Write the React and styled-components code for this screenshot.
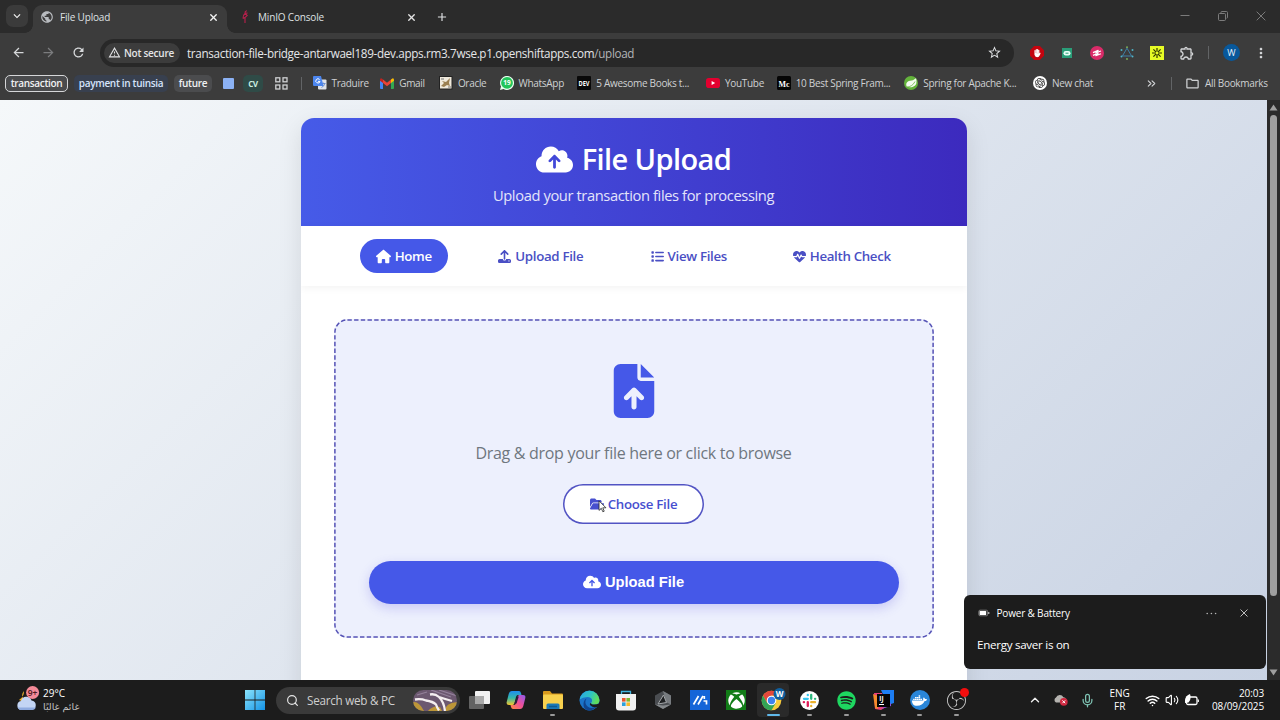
import React from "react";
import styled, { createGlobalStyle } from "styled-components";
import {
    FaCloudArrowUp,
    FaHouse,
    FaUpload,
    FaList,
    FaHeartPulse,
    FaFileArrowUp,
    FaFolderOpen,
    FaSpotify,
    FaDocker,
    FaXbox,
} from "react-icons/fa6";
import {
    MdArrowBack,
    MdArrowForward,
    MdRefresh,
    MdKeyboardArrowDown,
    MdAdd,
    MdStarBorder,
    MdMoreVert,
    MdOutlineWarningAmber,
    MdOutlineExtension,
    MdOutlineFolder,
    MdPublic,
} from "react-icons/md";
import { SiOpenai, SiObsstudio } from "react-icons/si";
import { Search, Mic, Wifi, Volume2, ChevronUp, ChevronsRight, X } from "lucide-react";

const GlobalStyle = createGlobalStyle`
    * {
        box-sizing: border-box;
    }
    body {
        margin: 0;
        overflow: hidden;
        font-family: "Open Sans", "Noto Sans", sans-serif;
    }
    svg {
        display: block;
        flex: none;
    }
`;

const BOOKMARKS = [
    { name: "Traduire", width: 35, icon: <TranslateIcon /> },
    { name: "Gmail", width: 26, icon: <GmailIcon /> },
    { name: "Oracle", width: 28, icon: <OracleIcon /> },
    { name: "WhatsApp", width: 45, icon: <WhatsAppIcon /> },
    { name: "5 Awesome Books t...", width: 96, icon: <DevIcon /> },
    { name: "YouTube", width: 38, icon: <YouTubeIcon /> },
    { name: "10 Best Spring Fram...", width: 95, icon: <MkIcon /> },
    { name: "Spring for Apache K...", width: 96, icon: <SpringIcon /> },
    { name: "New chat", width: 42, icon: <ChatIcon /> },
];

const TASKS = [
    { id: "taskview", icon: <TaskViewIcon /> },
    { id: "copilot", icon: <CopilotIcon /> },
    { id: "explorer", icon: <ExplorerIcon />, open: true },
    { id: "edge", icon: <EdgeIcon /> },
    { id: "store", icon: <StoreIcon /> },
    { id: "armoury", icon: <ArmouryIcon /> },
    { id: "myasus", icon: <MyAsusIcon /> },
    { id: "xbox", icon: <XboxIcon /> },
    { id: "chrome", icon: <ChromeIcon />, open: true, active: true },
    { id: "slack", icon: <SlackIcon />, open: true },
    { id: "spotify", icon: <FaSpotify size={19} color="#1ed760" />, open: true },
    { id: "idea", icon: <IdeaIcon />, open: true },
    { id: "docker", icon: <DockerIcon />, open: true },
    { id: "obs", icon: <ObsIcon />, open: true },
];

export default function App() {
    return (
        <Screen>
            <GlobalStyle />
            <Browser />
            <Viewport>
                <UploadPage />
                <Scrollbar>
                    <ScrollArrow viewBox="0 0 9 7">
                        <path d="M4.5 0.5 8.5 6.5H0.5z" />
                    </ScrollArrow>
                    <ScrollThumb />
                    <ScrollArrow viewBox="0 0 9 7">
                        <path d="M4.5 6.5 8.5 0.5H0.5z" />
                    </ScrollArrow>
                </Scrollbar>
                <Toast>
                    <ToastHead>
                        <svg width="12" height="8" viewBox="0 0 12 8">
                            <rect x="0.8" y="1.2" width="8.8" height="5.6" rx="1.2" fill="none" stroke="#8d8d8d" strokeWidth="0.8" />
                            <rect x="1.6" y="2" width="6.6" height="4" rx="0.6" fill="#fff" />
                            <path d="M10.8 3v2" stroke="#ddd" strokeWidth="1" />
                        </svg>
                        <ToastApp>Power &amp; Battery</ToastApp>
                        <svg width="11" height="3" viewBox="0 0 11 3" fill="#b5b5b5">
                            <circle cx="1.2" cy="1.5" r="0.8" />
                            <circle cx="5.4" cy="1.5" r="0.8" />
                            <circle cx="9.6" cy="1.5" r="0.8" />
                        </svg>
                        <ToastClose viewBox="0 0 8 8">
                            <path d="M0.5 0.5l7 7M7.5 0.5l-7 7" />
                        </ToastClose>
                    </ToastHead>
                    <ToastBody>Energy saver is on</ToastBody>
                </Toast>
            </Viewport>
            <Taskbar />
        </Screen>
    );
}

function Browser() {
    return (
        <div>
            <TabStrip>
                <TabSearch>
                    <MdKeyboardArrowDown size={14} />
                </TabSearch>
                <Tab $active>
                    <MdPublic size={14} color="#b9bcc0" />
                    <TabTitle>File Upload</TabTitle>
                    <X size={11} color="#f4f4f4" strokeWidth={3} />
                </Tab>
                <Tab>
                    <MinioIcon />
                    <TabTitle>MinIO Console</TabTitle>
                    <X size={11} color="#e4e4e4" strokeWidth={3} />
                </Tab>
                <NewTab>
                    <MdAdd size={14} />
                </NewTab>
                <WindowButtons>
                    <svg width="10" height="10" viewBox="0 0 10 10">
                        <path d="M0.5 4.5h9" />
                    </svg>
                    <svg width="10" height="10" viewBox="0 0 10 10">
                        <rect x="0.5" y="2.5" width="7" height="7" rx="1" />
                        <path d="M3 2V1.2Q3 .5 3.7.5H8.5Q9.5.5 9.5 1.5V6.5Q9.5 7.2 8.5 7.2" />
                    </svg>
                    <svg width="10" height="10" viewBox="0 0 10 10">
                        <path d="M0.7 0.7l8.6 8.6M9.3 0.7L0.7 9.3" />
                    </svg>
                </WindowButtons>
            </TabStrip>
            <Toolbar>
                <NavButton>
                    <MdArrowBack size={15} color="#d6d8da" />
                </NavButton>
                <NavButton>
                    <MdArrowForward size={15} color="#7b7c7e" />
                </NavButton>
                <NavButton>
                    <MdRefresh size={15} color="#d6d8da" />
                </NavButton>
                <Omnibox>
                    <NotSecure>
                        <MdOutlineWarningAmber size={13} />
                        <span>Not secure</span>
                    </NotSecure>
                    <Url>
                        transaction-file-bridge-antarwael189-dev.apps.rm3.7wse.p1.openshiftapps.com
                        <UrlPath>/upload</UrlPath>
                    </Url>
                    <MdStarBorder size={15} color="#dfe1e3" />
                </Omnibox>
                <Extensions>
                    <svg width="14" height="14" viewBox="0 0 14 14">
                        <path d="M4.2 0h5.6L14 4.2v5.6L9.8 14H4.2L0 9.8V4.2z" fill="#c4040f" />
                        <path
                            d="M5 7V4.6M6.3 6.5V3.5M7.6 6.5V3.5M8.8 7V4.2M5 7v1.6q.4 2 2.1 2 1.6 0 2.3-1.900l.6-1.500"
                            fill="#fff"
                            stroke="#fff"
                            strokeWidth="1.1"
                            strokeLinecap="round"
                        />
                    </svg>
                    <svg width="10" height="10" viewBox="0 0 10 10">
                        <rect width="10" height="10" fill="#2a9d78" />
                        <rect x="1.5" y="3" width="7" height="4.4" rx="2.2" fill="#e8fff7" />
                        <path d="M3.5 5.2h3" stroke="#2a9d78" strokeWidth="1" />
                    </svg>
                    <svg width="14" height="14" viewBox="0 0 14 14">
                        <circle cx="7" cy="7" r="7" fill="#d92b68" />
                        <path
                            d="M3 6.6 8.2 4.4 5.8 6.8 11 5M3 9.4 8.2 7.2 5.8 9.6 11 7.8"
                            fill="none"
                            stroke="#fff"
                            strokeWidth="1.2"
                            strokeLinejoin="round"
                        />
                    </svg>
                    <svg width="14" height="14" viewBox="0 0 14 14">
                        <path d="M7 2.2 2.4 10h9.2z" fill="none" stroke="#3e7fa5" strokeWidth="1" />
                        <g fill="#7fb85a">
                            <circle cx="7" cy="1.2" r="0.9" />
                            <circle cx="7" cy="13" r="0.9" />
                        </g>
                        <g fill="#4fb4c8">
                            <circle cx="1.5" cy="4" r="1" />
                            <circle cx="12.5" cy="4" r="1" />
                            <circle cx="1.5" cy="10.5" r="1" />
                            <circle cx="12.5" cy="10.5" r="1" />
                        </g>
                    </svg>
                    <svg width="14" height="14" viewBox="0 0 14 14">
                        <rect width="14" height="14" fill="#e6fb25" />
                        <path
                            d="M7 2v10M2 7h10M3.4 3.4l7.2 7.2M10.6 3.4l-7.2 7.2"
                            stroke="#2c3300"
                            strokeWidth="1.2"
                        />
                        <circle cx="7" cy="7" r="1.4" fill="#e6fb25" />
                    </svg>
                    <MdOutlineExtension size={16} color="#d3d5d7" />
                </Extensions>
                <Divider />
                <Profile>W</Profile>
                <MdMoreVert size={16} color="#d6d8da" />
            </Toolbar>
            <BookmarkBar>
                <Chip $w="63px" $bg="#4a4b4d" $outlined>
                    transaction
                </Chip>
                <Chip $w="94px" $bg="#38404f" $color="#d5e3fb">
                    payment in tuinsia
                </Chip>
                <Chip $w="38px" $bg="#4b4c4e">
                    future
                </Chip>
                <BlueSquare />
                <Chip $w="20px" $bg="#2f4b47" $color="#cbf0e2">
                    cv
                </Chip>
                <AppsGrid viewBox="0 0 13 13">
                    <rect x="0.8" y="0.8" width="4" height="4" />
                    <rect x="8" y="0.8" width="4" height="4" />
                    <rect x="0.8" y="8" width="4" height="4" />
                    <rect x="8" y="8" width="4" height="4" />
                </AppsGrid>
                <Divider />
                <BookmarkList>
                    {BOOKMARKS.map((item) => (
                        <Bookmark key={item.name}>
                            {item.icon}
                            <BookmarkName $w={item.width}>{item.name}</BookmarkName>
                        </Bookmark>
                    ))}
                </BookmarkList>
                <ChevronsRight size={13} color="#d3d5d7" />
                <Divider $gap="13px" />
                <Bookmark>
                    <MdOutlineFolder size={15} />
                    <BookmarkName $w={64}>All Bookmarks</BookmarkName>
                </Bookmark>
            </BookmarkBar>
        </div>
    );
}

function UploadPage() {
    return (
        <Page>
            <Card>
                <CardHeader>
                    <Title>
                        <FaCloudArrowUp size={37} />
                        <span>File Upload</span>
                    </Title>
                    <Subtitle>Upload your transaction files for processing</Subtitle>
                </CardHeader>
                <Nav>
                    <NavLink $active $w={88}>
                        <FaHouse size={15} />
                        Home
                    </NavLink>
                    <NavLink $w={119}>
                        <FaUpload size={13} />
                        Upload File
                    </NavLink>
                    <NavLink $w={110}>
                        <FaList size={13} />
                        View Files
                    </NavLink>
                    <NavLink $w={129}>
                        <FaHeartPulse size={13} />
                        Health Check
                    </NavLink>
                </Nav>
                <DropZone>
                    <DashedOutline>
                        <rect x="0.9" y="0.9" width="598.2" height="317.2" rx="12.5" />
                    </DashedOutline>
                    <FaFileArrowUp size={54} color="#4558e8" />
                    <DropText>Drag &amp; drop your file here or click to browse</DropText>
                    <ChooseButton>
                        <FaFolderOpen size={14} />
                        Choose File
                        <Pointer viewBox="0 0 10 15">
                            <path d="M1 1v11l2.6-2.4 1.8 4 1.6-.7-1.7-3.9H9z" />
                        </Pointer>
                    </ChooseButton>
                    <SubmitButton>
                        <FaCloudArrowUp size={18} />
                        Upload File
                    </SubmitButton>
                </DropZone>
            </Card>
        </Page>
    );
}

function Taskbar() {
    return (
        <Bar>
            <Weather>
                <WeatherIcon />
                <WeatherText>
                    <span>29°C</span>
                    <Condition dir="rtl">غائم غالبًا</Condition>
                </WeatherText>
            </Weather>
            <svg width="20" height="20" viewBox="0 0 20 20">
                <defs>
                    <linearGradient id="win" x1="0" y1="0" x2="1" y2="1">
                        <stop offset="0" stopColor="#8be3fb" />
                        <stop offset="1" stopColor="#1493e6" />
                    </linearGradient>
                </defs>
                <path d="M0 0h9.6v9.6H0zM10.4 0H20v9.6h-9.6zM0 10.4h9.6V20H0zM10.4 10.4H20V20h-9.6z" fill="url(#win)" />
            </svg>
            <SearchBox>
                <Search size={13} strokeWidth={2.2} color="#e6e6e6" />
                <SearchText>Search web &amp; PC</SearchText>
                <SearchArt />
            </SearchBox>
            <Tasks>
                {TASKS.map((task) => (
                    <Task key={task.id} $active={task.active}>
                        {task.icon}
                        {task.open && <Indicator $active={task.active} />}
                    </Task>
                ))}
            </Tasks>
            <Tray>
                <ChevronUp size={14} strokeWidth={2.4} color="#f0f0f0" />
                <svg width="15" height="12" viewBox="0 0 15 12">
                    <path d="M3 8.6a2.8 2.8 0 0 1 0-5A4 4 0 0 1 10.4 3.2 3 3 0 0 1 12 8.6z" fill="#b5b3af" />
                    <circle cx="10.8" cy="7.8" r="3.9" fill="#cf2840" />
                    <path d="M9.4 6.4l2.8 2.8M12.2 6.4L9.4 9.2" stroke="#fff" strokeWidth="1" />
                </svg>
                <Mic size={15} strokeWidth={2} color="#7fc4b4" />
            </Tray>
            <Language>
                <span>ENG</span>
                <span>FR</span>
            </Language>
            <Status>
                <Wifi size={15} strokeWidth={2.4} />
                <Volume2 size={14} strokeWidth={1.9} />
                <svg width="14" height="12" viewBox="0 0 14 12">
                    <rect x="1.5" y="3" width="10.5" height="7.5" rx="1.5" fill="none" stroke="#fff" strokeWidth="1.3" />
                    <path d="M13.3 5.5v2.5" stroke="#fff" strokeWidth="1.2" />
                    <path d="M0 9Q-.8 2 5 0 6.8 5.5 3.5 8.6z" fill="#fff" />
                </svg>
            </Status>
            <Clock>
                <span>20:03</span>
                <span>08/09/2025</span>
            </Clock>
        </Bar>
    );
}

/* favicons */

function MinioIcon() {
    return (
        <svg width="14" height="14" viewBox="0 0 14 14">
            <path
                d="M9 .8Q6.6 1.2 7.2 3.4L9.2 5.4 7 7.6 4.8 8.4M7.2 3.2Q5 5 5 8.4M7 7.6V13M7.4 3.2 9.6 3"
                fill="none"
                stroke="#b81f4c"
                strokeWidth="1.1"
            />
        </svg>
    );
}

function TranslateIcon() {
    return (
        <svg width="14" height="14" viewBox="0 0 14 14">
            <rect x="5" y="3.5" width="8.5" height="10" rx="1" fill="#dfe3ea" />
            <path d="M8 7.5h4.5M10.2 6.5v1M8.5 11.5q3-1.5 3.2-4" stroke="#6b8fd0" fill="none" />
            <path d="M1 0h7l2.5 10H1q-1 0-1-1V1Q0 0 1 0z" fill="#4c86ee" />
            <path d="M6.6 3.6A2.1 2.1 0 1 0 7 5.4H5" stroke="#fff" fill="none" strokeWidth="1" />
        </svg>
    );
}

function GmailIcon() {
    return (
        <svg width="14" height="11" viewBox="0 0 14 11">
            <path d="M0 2v8q0 1 1 1h2V4z" fill="#4285f4" />
            <path d="M14 2v8q0 1-1 1h-2V4z" fill="#34a853" />
            <path d="M3 1.5 7 4.7 11 1.5V5L7 8.2 3 5z" fill="#ea4335" />
            <path d="M0 2Q0 0 1.6.4L3 1.5V5L0 2.8z" fill="#c5221f" />
            <path d="M14 2q0-2-1.6-1.6L11 1.5V5l3-2.2z" fill="#fbbc04" />
        </svg>
    );
}

function OracleIcon() {
    return (
        <svg width="14" height="14" viewBox="0 0 14 14">
            <rect x="0.5" y="0.5" width="12.5" height="12.5" fill="#efe9dc" stroke="#222" />
            <path d="M2 10 5 7 3 5l4 1 4-4-1 5 1 3-3-1-3 2z" fill="#9b8052" />
            <path d="M2 3h3M9 11h3" stroke="#777" />
        </svg>
    );
}

function WhatsAppIcon() {
    return (
        <svg width="14" height="14" viewBox="0 0 14 14">
            <path d="M0 14 1 10.5A7 7 0 1 1 3.5 13z" fill="#e9fff0" />
            <circle cx="7" cy="6.9" r="5.9" fill="#22c55a" />
            <BadgeText x="7" y="9.3" fontSize="6.5">
                19
            </BadgeText>
        </svg>
    );
}

function DevIcon() {
    return (
        <svg width="14" height="14" viewBox="0 0 14 14">
            <rect width="14" height="14" rx="1" fill="#090909" />
            <BadgeText x="7" y="9.6" fontSize="7" textLength="11" lengthAdjust="spacingAndGlyphs">
                DEV
            </BadgeText>
        </svg>
    );
}

function YouTubeIcon() {
    return (
        <svg width="14" height="14" viewBox="0 0 14 14">
            <rect y="2" width="14" height="10" rx="2.8" fill="#e3002f" />
            <path d="M5.6 4.9v4.2L9.2 7z" fill="#fff" />
        </svg>
    );
}

function MkIcon() {
    return (
        <svg width="14" height="14" viewBox="0 0 14 14">
            <rect width="14" height="14" rx="1.5" fill="#050505" />
            <SerifText x="1.5" y="10.5" fontSize="9" textLength="11" lengthAdjust="spacingAndGlyphs">
                Mc
            </SerifText>
        </svg>
    );
}

function SpringIcon() {
    return (
        <svg width="14" height="14" viewBox="0 0 14 14">
            <circle cx="7" cy="7" r="7" fill="#64b33c" />
            <path d="M12 2.2Q14 8.5 9 10.8 5.5 12 2.6 10.6 1.2 6.8 4.8 5 9.5 4.8 12 2.2z" fill="#f4fbf0" />
            <path d="M2.4 11.2Q8.5 10.8 11 5.5" fill="none" stroke="#64b33c" strokeWidth="0.8" />
        </svg>
    );
}

function ChatIcon() {
    return (
        <ChatDisc>
            <SiOpenai size={10} color="#222" />
        </ChatDisc>
    );
}

/* taskbar icons */

function WeatherIcon() {
    return (
        <svg width="24" height="26" viewBox="0 0 24 26">
            <path d="M8 5a6.5 6.5 0 0 0 8 10l-6 2-7-3q5-3 5-9z" fill="#f2b42c" />
            <path d="M5 24a4.6 4.6 0 0 1 0-9 5.5 5.5 0 0 1 10.5-.5A4.8 4.8 0 0 1 15.8 24z" fill="#c3d5f4" />
            <path d="M1.5 21.5q1.5 2.5 3.5 2.5h11q2.5 0 4-2.5z" fill="#8fabdf" />
            <circle cx="16.6" cy="6.5" r="6.5" fill="#f48a98" />
            <CountText x="16.6" y="9.5" fontSize="8.5">
                9+
            </CountText>
        </svg>
    );
}

function SearchArt() {
    return (
        <svg width="44" height="21" viewBox="0 0 44 21">
            <defs>
                <clipPath id="art">
                    <rect width="44" height="21" rx="10.5" />
                </clipPath>
            </defs>
            <g clipPath="url(#art)">
                <rect width="44" height="21" fill="#6c5870" />
                <path d="M0 12q6-1 11 9H0zM15 21q5-6 12-4l2 4zM32 21q0-8 12-9v9z" fill="#bd9638" />
                <path
                    d="M2 9.5q6-1 11 1 7 1 10 4 1 3 3 6M17 4.5q5-1 9 2.5 6 2 13 4M26 7q5 5 6 14"
                    fill="none"
                    stroke="#f4eef0"
                    strokeWidth="2.3"
                />
                <path d="M18 0l20 7M26 0l18 6M4 5l10-3" stroke="#93809a" strokeWidth="1.2" />
            </g>
        </svg>
    );
}

function TaskViewIcon() {
    return (
        <svg width="21" height="20" viewBox="0 0 21 20">
            <rect x="6" y="1" width="15" height="13" rx="1" fill="#f0f0f0" />
            <rect x="0" y="6" width="15" height="13" rx="1" fill="#707070" fillOpacity="0.85" />
            <path d="M6 6h9v8H6z" fill="#a9a9a9" />
        </svg>
    );
}

function CopilotIcon() {
    return (
        <svg width="20" height="20" viewBox="0 0 20 20">
            <defs>
                <linearGradient id="copA" x1="0" y1="0" x2="0" y2="1">
                    <stop offset="0" stopColor="#1e8df0" />
                    <stop offset="0.5" stopColor="#35b8a8" />
                    <stop offset="1" stopColor="#f5c62c" />
                </linearGradient>
                <linearGradient id="copB" x1="1" y1="0" x2="0" y2="1">
                    <stop offset="0" stopColor="#8a5cf0" />
                    <stop offset="0.5" stopColor="#ee4f9a" />
                    <stop offset="1" stopColor="#ff8a3c" />
                </linearGradient>
            </defs>
            <path d="M6 1h7q1.5 0 2 2l.5 2h-3.500q-1.500 0-2 2L8.500 13q-.5 2-2 2H3q-3 0-2.300-3l2-8Q3.500 1 6 1z" fill="url(#copA)" />
            <path d="M14 19H7q-1.500 0-2-2l-.5-2H8q1.500 0 2-2L11.500 7q.5-2 2-2H17q3 0 2.300 3l-2 8Q16.500 19 14 19z" fill="url(#copB)" />
            <path d="M11 6.5h1.8L10.5 13.5H8.3z" fill="#2a1d3c" />
        </svg>
    );
}

function ExplorerIcon() {
    return (
        <svg width="20" height="20" viewBox="0 0 20 20">
            <path d="M0 2q0-1 1-1h6l2 2.5h10q1 0 1 1V8H0z" fill="#d99a1c" />
            <rect y="4.5" width="20" height="14.5" rx="1" fill="#f8d14e" />
            <path d="M3.5 19v-4q0-1.500 1.500-1.500h10q1.500 0 1.500 1.500v4z" fill="#1c79b8" />
            <path d="M6 16.5h8" stroke="#0e5b93" strokeWidth="1.5" />
        </svg>
    );
}

function EdgeIcon() {
    return (
        <svg width="21" height="21" viewBox="0 0 21 21">
            <defs>
                <linearGradient id="edgeA" x1="0" y1="0" x2="1" y2="0.3">
                    <stop offset="0" stopColor="#2aa6e8" />
                    <stop offset="0.6" stopColor="#2fc5c0" />
                    <stop offset="1" stopColor="#5fdd5c" />
                </linearGradient>
            </defs>
            <circle cx="10.5" cy="10.5" r="10" fill="#1b74c9" />
            <path d="M.6 9.5A10 10 0 0 1 20.500 10q0 4.500-5 4.500-3.500 0-3.500-1.500 1.500-1.500 1-3.500Q12 7 8.500 7 3.500 7 .6 9.500z" fill="url(#edgeA)" />
            <path d="M7.5 8.5q-2.500 4 .5 7.500 3.500 3.500 9.500.5Q14 21 9 20.400 4 19 4.500 13.500 5 9.500 7.500 8.500z" fill="#10458f" />
            <path d="M12 13q0 1.500 3.500 1.500 2.500 0 4.500-1l1.500 0-3 3.500q-5 1-7-1.500-1.500-1.500.5-2.500z" fill="#1c1c1c" />
        </svg>
    );
}

function StoreIcon() {
    return (
        <svg width="20" height="21" viewBox="0 0 20 21">
            <path d="M5.5 6V1.5h9V6" fill="none" stroke="#3fb4de" strokeWidth="1.3" />
            <path d="M0 4h20v13.5q0 3-3 3H3q-3 0-3-3z" fill="#f1f1f1" />
            <path d="M6 8h3.6v3.6H6z" fill="#e8542c" />
            <path d="M10.4 8H14v3.6h-3.6z" fill="#7cb82f" />
            <path d="M6 12.4h3.6V16H6z" fill="#2b9fdc" />
            <path d="M10.4 12.4H14V16h-3.6z" fill="#f5b92a" />
        </svg>
    );
}

function ArmouryIcon() {
    return (
        <svg width="18" height="20" viewBox="0 0 18 20">
            <path d="M9 1l8 4.5v9L9 19l-8-4.5v-9z" fill="#4a4d51" />
            <path d="M9 1 17 5.5v9L12 12z" fill="#777b7f" />
            <path d="M9.5 5 12.5 12.5 4 14z" fill="#1f2123" stroke="#a4a7aa" strokeWidth="1" />
            <path d="M1 14.5 9 19l8-4.5L9 15.5z" fill="#85898c" />
        </svg>
    );
}

function MyAsusIcon() {
    return (
        <svg width="20" height="20" viewBox="0 0 20 20">
            <rect width="20" height="20" fill="#1565d8" />
            <path d="M3.5 14.5 8.500 6M8 14.5 13 6M14.300 6v3M13.500 11h3v3.500" fill="none" stroke="#fff" strokeWidth="1.7" />
        </svg>
    );
}

function XboxIcon() {
    return (
        <XboxTile>
            <FaXbox size={17} color="#fff" />
        </XboxTile>
    );
}

function ChromeIcon() {
    return (
        <svg width="26" height="24" viewBox="0 0 26 24">
            <circle cx="11.5" cy="12.5" r="9.8" fill="#f7cb3b" />
            <path d="M3 7.6A9.8 9.8 0 0 1 20 7.6h-8.5L7.2 15z" fill="#e4483c" />
            <path d="M3 7.6A9.8 9.8 0 0 0 11.5 22.3L15.8 15H7.2z" fill="#33a455" />
            <circle cx="11.5" cy="12.5" r="4.8" fill="#fff" />
            <circle cx="11.5" cy="12.5" r="3.7" fill="#3e82ee" />
            <circle cx="19.5" cy="6" r="6" fill="#10609f" />
            <BadgeText x="19.5" y="8.9" fontSize="8">
                W
            </BadgeText>
        </svg>
    );
}

function SlackIcon() {
    return (
        <svg width="19" height="19" viewBox="0 0 19 19">
            <circle cx="9.5" cy="9.5" r="9.5" fill="#fff" />
            <g strokeWidth="2.3" strokeLinecap="round" fill="none">
                <path d="M4 7.8h3.8M7.8 3.9v.3" stroke="#36c5f0" />
                <path d="M11.2 4v3.8M15 7.8h.2" stroke="#2eb67d" />
                <path d="M11.2 11.2H15M11.2 15v.2" stroke="#ecb22e" />
                <path d="M7.8 11.2V15M4 11.2h-.2" stroke="#e01e5a" />
            </g>
        </svg>
    );
}

function IdeaIcon() {
    return (
        <svg width="21" height="20" viewBox="0 0 21 20">
            <path d="M8 0h13v13l-6 2z" fill="#1d7df2" />
            <path d="M1 3h8l4 14-5 3-6-1z" fill="#e8407a" />
            <path d="M0 4l5 2v13l-3-1z" fill="#f58b2c" />
            <path d="M8 19l10-3v-3z" fill="#8753e0" />
            <rect x="4" y="4" width="13" height="13" fill="#050505" />
            <BadgeText x="8.5" y="10.5" fontSize="6.5">
                IJ
            </BadgeText>
            <path d="M6 14.5h5" stroke="#fff" />
        </svg>
    );
}

function DockerIcon() {
    return (
        <DockerDisc>
            <FaDocker size={15} color="#fff" />
        </DockerDisc>
    );
}

function ObsIcon() {
    return (
        <ObsWrap>
            <SiObsstudio size={19} color="#c9c9c9" />
            <RecDot />
        </ObsWrap>
    );
}

const Screen = styled.div`
    width: 1280px;
    height: 720px;
    display: flex;
    flex-direction: column;
    overflow: hidden;
    background: #1c1c1c;
`;

const TabStrip = styled.div`
    height: 33px;
    padding: 5px 14px 0 6px;
    display: flex;
    background: #2b2b2b;
    color: #dfe1e3;
`;

const TabSearch = styled.div`
    width: 22px;
    height: 22px;
    margin-right: 5px;
    display: flex;
    align-items: center;
    justify-content: center;
    border-radius: 7px;
    background: #3b3b3b;
    color: #f4f4f4;
`;

const Tab = styled.div`
    position: relative;
    width: ${(props) => (props.$active ? "194px" : "198px")};
    height: 28px;
    padding: 0 8px 4px ${(props) => (props.$active ? "7px" : "11px")};
    display: flex;
    align-items: center;
    gap: 6px;
    border-radius: 9px 9px 0 0;
    background: ${(props) => (props.$active ? "#3c3c3c" : "transparent")};

    ${(props) =>
        props.$active &&
        `
        &::before,
        &::after {
            position: absolute;
            bottom: 0;
            width: 8px;
            height: 8px;
            content: "";
        }
        &::before {
            left: -8px;
            background: radial-gradient(circle at 0 0, transparent 7.5px, #3c3c3c 8px);
        }
        &::after {
            right: -8px;
            background: radial-gradient(circle at 100% 0, transparent 7.5px, #3c3c3c 8px);
        }
    `}
`;

const TabTitle = styled.span`
    flex: 1;
    font-size: 10px;
    letter-spacing: -0.17px;
`;

const NewTab = styled.div`
    height: 23px;
    padding-left: 10px;
    display: flex;
    align-items: center;
`;

const WindowButtons = styled.div`
    height: 22px;
    margin-left: auto;
    display: flex;
    align-items: center;
    gap: 28px;

    svg {
        fill: none;
        stroke: #858585;
        stroke-width: 0.9;
    }
`;

const Toolbar = styled.div`
    height: 38px;
    padding: 1px 0 0 3px;
    display: flex;
    align-items: center;
    background: #3c3c3c;
`;

const NavButton = styled.div`
    width: 30px;
    display: flex;
    flex: none;
    justify-content: center;
`;

const Omnibox = styled.div`
    width: 914px;
    height: 28px;
    margin-left: 7px;
    padding: 0 12px 0 4px;
    display: flex;
    flex: none;
    align-items: center;
    border-radius: 14px;
    background: #282828;
`;

const NotSecure = styled.div`
    width: 76px;
    height: 20px;
    padding-left: 4px;
    display: flex;
    align-items: center;
    gap: 3px;
    border-radius: 10px;
    background: #3c3c3c;
    color: #e3e4e6;
    font-size: 10px;
    font-weight: 600;
    letter-spacing: -0.25px;
    white-space: nowrap;
`;

const Url = styled.div`
    flex: 1;
    padding-left: 7px;
    color: #e5e6e8;
    font-size: 11.7px;
    letter-spacing: -0.33px;
    white-space: nowrap;
`;

const UrlPath = styled.span`
    color: #b2b4b7;
`;

const Extensions = styled.div`
    width: 180px;
    margin-left: 8px;
    display: grid;
    flex: none;
    grid-template-columns: repeat(6, 30px);
    place-items: center;
`;

const Divider = styled.div`
    width: 1px;
    height: 13px;
    margin: 0 ${(props) => props.$gap || "6px"};
    flex: none;
    background: #626466;
`;

const Profile = styled.div`
    width: 17px;
    height: 17px;
    margin: 0 13px 0 8px;
    flex: none;
    border-radius: 50%;
    background: #08589b;
    color: #e9f4ff;
    font-size: 9px;
    line-height: 17px;
    text-align: center;
`;

const BookmarkBar = styled.div`
    height: 29px;
    padding: 0 0 5px 5px;
    display: flex;
    align-items: center;
    background: #3c3c3c;
    color: #cfd1d3;
`;

const Chip = styled.div`
    width: ${(props) => props.$w};
    height: 17px;
    margin-right: 6px;
    flex: none;
    border: 1.3px solid ${(props) => (props.$outlined ? "#d5d6d8" : "transparent")};
    border-radius: 5px;
    background: ${(props) => props.$bg};
    color: ${(props) => props.$color || "#f0f1f2"};
    font-size: 10px;
    font-weight: 600;
    letter-spacing: -0.33px;
    line-height: 14px;
    text-align: center;
    white-space: nowrap;
`;

const BlueSquare = styled.div`
    width: 11px;
    height: 11px;
    margin: 0 9px 0 5px;
    flex: none;
    border-radius: 1px;
    background: #8cb2f5;
`;

const AppsGrid = styled.svg`
    width: 13px;
    height: 13px;
    margin: 0 7px 0 6px;
    fill: none;
    stroke: #cfd1d3;
    stroke-width: 1.3;
`;

const BookmarkList = styled.div`
    width: 837px;
    padding-left: 4.5px;
    display: flex;
    flex: none;
    gap: 13.7px;
`;

const Bookmark = styled.div`
    display: flex;
    flex: none;
    align-items: center;
    gap: 5px;
`;

const BookmarkName = styled.span`
    width: ${(props) => props.$w}px;
    font-size: 10px;
    letter-spacing: -0.3px;
    white-space: nowrap;
`;

const ChatDisc = styled.div`
    width: 14px;
    height: 14px;
    display: grid;
    place-items: center;
    border-radius: 50%;
    background: #fff;
`;

const BadgeText = styled.text`
    fill: #fff;
    font-family: "Open Sans", sans-serif;
    font-weight: 700;
    text-anchor: middle;
`;

const CountText = styled(BadgeText)`
    fill: #4c1820;
    font-weight: 600;
`;

const SerifText = styled.text`
    fill: #fff;
    font-family: "Liberation Serif", serif;
    font-weight: 700;
`;

const Viewport = styled.div`
    position: relative;
    height: 580px;
    display: flex;
`;

const Page = styled.div`
    width: 1267px;
    height: 580px;
    padding-top: 18px;
    display: flex;
    justify-content: center;
    overflow: hidden;
    background: linear-gradient(135deg, #f5f8fa 0%, #c8d2e3 100%);
`;

const Card = styled.div`
    width: 666px;
    height: 620px;
    flex: none;
    border-radius: 13px;
    background: #fff;
    box-shadow: 0 8px 25px rgba(0, 0, 0, 0.1);
    overflow: hidden;
`;

const CardHeader = styled.div`
    height: 108px;
    padding-top: 21px;
    display: flex;
    flex-direction: column;
    align-items: center;
    background: linear-gradient(to right, #465be8, #3c2abe);
    color: #fff;
`;

const Title = styled.div`
    height: 40px;
    display: flex;
    align-items: center;
    gap: 9px;
    font-size: 29px;
    font-weight: 600;
    letter-spacing: -0.6px;
    line-height: 40px;
    white-space: nowrap;
`;

const Subtitle = styled.div`
    margin-top: 6px;
    color: #e3e4fa;
    font-size: 14.7px;
    letter-spacing: -0.39px;
    line-height: 20px;
    white-space: nowrap;
`;

const Nav = styled.div`
    height: 60px;
    padding-right: 1px;
    display: flex;
    align-items: center;
    justify-content: center;
    gap: 33.5px;
    box-shadow: 0 2px 8px rgba(0, 0, 0, 0.05);
`;

const NavLink = styled.div`
    width: ${(props) => props.$w}px;
    height: 34px;
    display: flex;
    align-items: center;
    justify-content: center;
    gap: 4px;
    border-radius: 17px;
    background: ${(props) => (props.$active ? "#4558e8" : "transparent")};
    color: ${(props) => (props.$active ? "#fff" : "#4a4fc4")};
    font-size: 13.3px;
    font-weight: 600;
    letter-spacing: -0.33px;
    white-space: nowrap;
`;

const DropZone = styled.div`
    position: relative;
    height: 319px;
    margin: 33px 33px 0;
    padding: 45px 35px 0;
    display: flex;
    flex-direction: column;
    align-items: center;
    border-radius: 13px;
    background: #edf0fd;
`;

/* finer dashes than the native dashed border gives */
const DashedOutline = styled.svg`
    position: absolute;
    top: 0;
    left: 0;
    width: 600px;
    height: 319px;
    fill: none;
    stroke: #5552b5;
    stroke-width: 1.5;
    stroke-dasharray: 4.4 2.3;
`;

const DropText = styled.div`
    margin-top: 23px;
    color: #6f777f;
    font-size: 16px;
    letter-spacing: -0.3px;
    line-height: 24px;
    white-space: nowrap;
`;

const ChooseButton = styled.div`
    position: relative;
    width: 141px;
    height: 40px;
    margin-top: 19px;
    display: flex;
    align-items: center;
    justify-content: center;
    gap: 4px;
    border-radius: 20px;
    background: #fff;
    box-shadow: inset 0 0 0 1.5px #5254c4;
    color: #474fcf;
    font-size: 13.3px;
    font-weight: 600;
    letter-spacing: -0.3px;
    white-space: nowrap;
`;

const Pointer = styled.svg`
    position: absolute;
    top: 16px;
    left: 35px;
    width: 9px;
    height: 13px;
    fill: #fff;
    stroke: #222;
    stroke-width: 0.9;
`;

const SubmitButton = styled.div`
    width: 530px;
    height: 43px;
    margin-top: 37px;
    padding-bottom: 2px;
    display: flex;
    align-items: center;
    justify-content: center;
    gap: 4px;
    border-radius: 22px;
    background: #4558e8;
    box-shadow: 0 4px 12px rgba(67, 60, 220, 0.22);
    color: #fff;
    font-family: "Liberation Sans", Arial, sans-serif;
    font-size: 14.7px;
    font-weight: 700;
`;

const Scrollbar = styled.div`
    width: 13px;
    padding: 4px 0;
    display: flex;
    flex-direction: column;
    align-items: center;
    background: #2b2b2b;
`;

const ScrollArrow = styled.svg`
    width: 9px;
    height: 7px;
    fill: #9f9f9f;
`;

const ScrollThumb = styled.div`
    width: 7px;
    height: 481px;
    margin: 4px 0 auto;
    border-radius: 4px;
    background: #9f9f9f;
`;

const Toast = styled.div`
    position: absolute;
    top: 495px;
    left: 964px;
    width: 302px;
    height: 74px;
    padding: 9px 18px 0 14px;
    border-radius: 6px;
    background: #1c1c1c;
    color: #fff;
    font-size: 10px;
`;

const ToastHead = styled.div`
    height: 18px;
    display: flex;
    align-items: center;
    gap: 6.5px;
`;

const ToastApp = styled.span`
    flex: 1;
    letter-spacing: -0.17px;
`;

const ToastClose = styled.svg`
    width: 8px;
    height: 8px;
    margin-left: 17px;
    stroke: #cfcfcf;
    stroke-width: 0.9;
`;

const ToastBody = styled.div`
    margin: 15px 0 0 -1px;
    font-size: 11.6px;
    letter-spacing: -0.28px;
    line-height: 16px;
`;

const Bar = styled.div`
    height: 40px;
    padding: 0 16px;
    display: flex;
    align-items: center;
    background: #1c1c1c;
    color: #fff;
    font-size: 10px;
`;

const Weather = styled.div`
    width: 229px;
    display: flex;
    gap: 3px;
`;

const WeatherText = styled.div`
    display: flex;
    flex-direction: column;
    align-items: flex-start;
    line-height: 14px;
`;

const Condition = styled.span`
    color: #c3c3c3;
    font-family: "DejaVu Sans", sans-serif;
    font-size: 9.5px;
    white-space: nowrap;
`;

const SearchBox = styled.div`
    width: 184px;
    height: 27px;
    margin-left: 11px;
    padding: 0 3px 0 10px;
    display: flex;
    align-items: center;
    border-radius: 14px;
    background: #3a3a3a;
`;

const SearchText = styled.span`
    flex: 1;
    padding-left: 8px;
    color: #cfcfcf;
    font-size: 11.7px;
    letter-spacing: -0.27px;
    white-space: nowrap;
`;

const Tasks = styled.div`
    margin-left: 1.3px;
    display: grid;
    grid-template-columns: repeat(14, 36.68px);
`;

const Task = styled.div`
    position: relative;
    height: 34px;
    margin: 0 2px;
    display: flex;
    align-items: center;
    justify-content: center;
    border-radius: 4px;
    background: ${(props) => (props.$active ? "#2a2a2a" : "transparent")};
`;

const Indicator = styled.div`
    position: absolute;
    bottom: 1px;
    width: ${(props) => (props.$active ? "13px" : "5px")};
    height: 2.5px;
    border-radius: 2px;
    background: ${(props) => (props.$active ? "#60b8ea" : "#9a9a9a")};
`;

const XboxTile = styled.div`
    width: 20px;
    height: 20px;
    display: grid;
    place-items: center;
    background: #117c17;
`;

const DockerDisc = styled.div`
    width: 20px;
    height: 20px;
    display: grid;
    place-items: center;
    border-radius: 50%;
    background: #2a86d8;
`;

const ObsWrap = styled.div`
    position: relative;
`;

const RecDot = styled.div`
    position: absolute;
    top: -3px;
    right: -3px;
    width: 9px;
    height: 9px;
    border-radius: 50%;
    background: #f20d0d;
`;

const Tray = styled.div`
    width: 67px;
    margin-left: 53px;
    display: flex;
    align-items: center;
    justify-content: space-between;
`;

const Language = styled.div`
    width: 26px;
    margin-left: 12px;
    display: flex;
    flex-direction: column;
    align-items: center;
    line-height: 13px;
`;

const Status = styled.div`
    width: 54px;
    margin-left: 12px;
    display: flex;
    align-items: center;
    justify-content: space-between;
`;

const Clock = styled.div`
    margin-left: auto;
    display: flex;
    flex-direction: column;
    align-items: flex-end;
    letter-spacing: -0.1px;
    line-height: 13px;
`;
